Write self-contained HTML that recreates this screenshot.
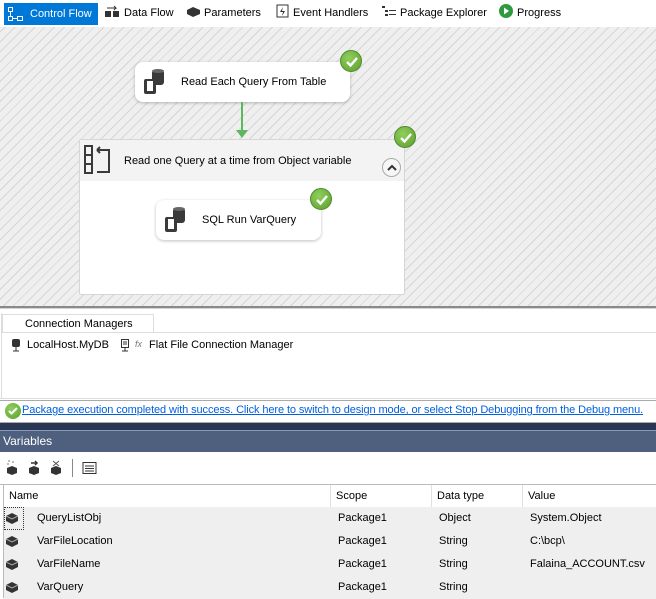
<!DOCTYPE html>
<html><head><meta charset="utf-8"><style>
*{margin:0;padding:0;box-sizing:border-box}
body{width:656px;height:598px;overflow:hidden;font-family:"Liberation Sans",sans-serif;font-size:11px;color:#000;background:#fff;position:relative}
.abs{position:absolute}
.tabs{top:0;left:0;width:656px;height:27px;background:#fff}
.tab{position:absolute;top:2px;height:22px;line-height:22px;white-space:nowrap}
.canvas{top:27px;left:0;width:656px;height:279px;background:#efefef repeating-linear-gradient(-45deg,#efefef 0 6px,#d6d6d6 6px 7px)}
.node{background:#fff;border-radius:8px;box-shadow:0 1px 3px rgba(0,0,0,.25)}
.chk{width:22px;height:22px;border-radius:50%;background:radial-gradient(circle at 40% 35%,#8fcf5c,#5c9e2e);border:1px solid #4f8a28}
.chk svg{position:absolute;left:4px;top:4px}
.row{position:absolute;left:0;width:656px;height:23px;background:#efefef;line-height:23px}
.row span{position:absolute}
</style></head><body>
<div class="abs tabs">
 <div class="tab" style="left:4px;width:94px;background:#0078d7;color:#fff;top:3px"><svg style="position:absolute;left:3px;top:3px" width="17" height="16"><g fill="none" stroke="#fff"><rect x="1.5" y="1.5" width="4" height="4"/><rect x="1.5" y="10.5" width="4" height="4"/><rect x="10.5" y="10.5" width="5" height="4"/><path d="M3.5 6v4M6 12.5h4"/></g></svg><span style="position:absolute;left:26px">Control Flow</span></div>
 <div class="tab" style="left:104px"><svg width="17" height="14" style="vertical-align:-2px"><rect x="1" y="7" width="6" height="6" fill="#333"/><rect x="9" y="7" width="6" height="6" fill="#333"/><path d="M3 4h9l-2-2M12 4l-2 2" stroke="#333" fill="none"/></svg> Data Flow</div>
 <div class="tab" style="left:186px"><svg width="15" height="14" style="vertical-align:-2px"><path d="M1 6l6-3 7 3v4l-7 3-6-3z" fill="#333"/></svg> Parameters</div>
 <div class="tab" style="left:276px"><svg width="14" height="14" style="vertical-align:-2px"><rect x="1" y="1" width="11" height="12" fill="none" stroke="#333"/><path d="M7 3l-3 5h3l-1 4 3-5H6z" fill="#333"/></svg> Event Handlers</div>
 <div class="tab" style="left:381px"><svg width="16" height="14" style="vertical-align:-2px"><g fill="#333"><rect x="1" y="2" width="3" height="2"/><rect x="4" y="6" width="3" height="2"/><rect x="4" y="10" width="3" height="2"/><rect x="8" y="6" width="7" height="1"/><rect x="8" y="10" width="7" height="1"/></g></svg> Package Explorer</div>
 <div class="tab" style="left:498px"><svg width="16" height="16" style="vertical-align:-3px"><circle cx="8" cy="8" r="7" fill="#2e9a3e"/><path d="M6 4.5v7l5-3.5z" fill="#fff"/></svg> Progress</div>
</div>
<div class="abs canvas"></div>
<div class="abs node" style="left:135px;top:62px;width:215px;height:40px"></div>
<svg class="abs" style="left:142px;top:67px" width="28" height="30"><g fill="#3a3a3a"><rect x="10" y="3" width="12" height="15" rx="3"/><rect x="2" y="12" width="12" height="15" rx="2"/></g><ellipse cx="16" cy="4" rx="6" ry="2" fill="#666"/><rect x="5" y="14" width="6" height="10" fill="#fff"/></svg>
<div class="abs" style="left:181px;top:76px">Read Each Query From Table</div>
<div class="abs chk" style="left:340px;top:50px"><svg width="14" height="14"><path d="M2 7l3.5 3.5L12 3" stroke="#fff" stroke-width="2.4" fill="none"/></svg></div>
<div class="abs" style="left:241px;top:102px;width:2px;height:30px;background:#5cb85c"></div>
<svg class="abs" style="left:236px;top:130px" width="12" height="9"><path d="M0 0h12L6 8z" fill="#5cb85c"/></svg>
<div class="abs" style="left:79px;top:139px;width:326px;height:156px;background:#fff;border:1px solid #d6d6d6;border-radius:2px"></div>
<div class="abs" style="left:80px;top:140px;width:324px;height:41px;background:#f3f3f3"></div>
<svg class="abs" style="left:84px;top:145px" width="28" height="30"><g fill="none" stroke="#3a3a3a" stroke-width="2"><rect x="1" y="1" width="7" height="27"/><path d="M1 10h7M1 19h7M13 5h12v22h-12M13 5l3-3M13 5l3 3"/></g></svg>
<div class="abs" style="left:124px;top:155px">Read one Query at a time from Object variable</div>
<div class="abs" style="left:382px;top:158px;width:19px;height:19px;border:1px solid #aaa;border-radius:50%;background:#f6f6f6"><svg style="position:absolute;left:4px;top:5px" width="10" height="7"><path d="M1 6l4-4 4 4" stroke="#333" stroke-width="2" fill="none"/></svg></div>
<div class="abs chk" style="left:394px;top:126px"><svg width="14" height="14"><path d="M2 7l3.5 3.5L12 3" stroke="#fff" stroke-width="2.4" fill="none"/></svg></div>
<div class="abs node" style="left:156px;top:200px;width:165px;height:40px"></div>
<svg class="abs" style="left:163px;top:205px" width="28" height="30"><g fill="#3a3a3a"><rect x="10" y="3" width="12" height="15" rx="3"/><rect x="2" y="12" width="12" height="15" rx="2"/></g><ellipse cx="16" cy="4" rx="6" ry="2" fill="#666"/><rect x="5" y="14" width="6" height="10" fill="#fff"/></svg>
<div class="abs" style="left:202px;top:214px">SQL Run VarQuery</div>
<div class="abs chk" style="left:310px;top:188px"><svg width="14" height="14"><path d="M2 7l3.5 3.5L12 3" stroke="#fff" stroke-width="2.4" fill="none"/></svg></div>
<div class="abs" style="left:0;top:306px;width:656px;height:3px;background:#8a8a8a;border-bottom:1px solid #d0d4dc"></div>
<div class="abs" style="left:2px;top:314px;width:152px;height:19px;border:1px solid #ddd;border-bottom:none;line-height:18px;padding-left:22px">Connection Managers</div>
<div class="abs" style="left:2px;top:332px;width:654px;height:1px;background:#ddd"></div>
<div class="abs" style="left:1px;top:313px;width:1px;height:86px;background:#ddd"></div>
<svg class="abs" style="left:11px;top:338px" width="10" height="14"><rect x="1" y="1" width="8" height="8" rx="2" fill="#333"/><path d="M5 9v4M2 13h6" stroke="#333"/></svg>
<div class="abs" style="left:27px;top:339px">LocalHost.MyDB</div>
<svg class="abs" style="left:120px;top:338px" width="10" height="14"><rect x="1.5" y="1.5" width="7" height="8" fill="#fff" stroke="#333"/><path d="M3 4h4M3 6h4M5 10v3M2 13h6" stroke="#333"/></svg>
<div class="abs" style="left:135px;top:339px;font-style:italic;font-size:9px;color:#777">fx</div>
<div class="abs" style="left:149px;top:339px">Flat File Connection Manager</div>
<div class="abs" style="left:0;top:398px;width:656px;height:1px;background:#ddd"></div>
<div class="abs" style="left:0;top:400px;width:656px;height:1px;background:#aaa"></div>
<div class="abs" style="left:5px;top:403px;width:16px;height:16px;border-radius:50%;background:radial-gradient(circle at 40% 35%,#8fcf5c,#5c9e2e)"><svg style="position:absolute;left:3px;top:3px" width="10" height="10"><path d="M1 5l2.5 2.5L9 2" stroke="#fff" stroke-width="2" fill="none"/></svg></div>
<div class="abs" style="left:22px;top:404px;color:#0060e0;text-decoration:underline;white-space:nowrap;letter-spacing:-0.1px">Package execution completed with success. Click here to switch to design mode, or select Stop Debugging from the Debug menu.</div>
<div class="abs" style="left:0;top:422px;width:656px;height:1px;background:#aaa"></div>
<div class="abs" style="left:0;top:423px;width:656px;height:7px;background:#293654"></div>
<div class="abs" style="left:0;top:430px;width:656px;height:1px;background:#8a9ab8"></div>
<div class="abs" style="left:0;top:431px;width:656px;height:21px;background:#4f607e;color:#fff;line-height:21px;padding-left:3px;font-size:12px">Variables</div>
<svg class="abs" style="left:5px;top:459px" width="95" height="18"><g fill="#333"><path d="M2 9l5-2 5 2v5l-5 2-5-2z"/><path d="M24 9l5-2 5 2v5l-5 2-5-2z"/><path d="M46 9l5-2 5 2v5l-5 2-5-2z"/></g><path d="M3 2h2M7 3h2M2 5h2" stroke="#777"/><path d="M26 4h6M30 2l2 2-2 2" stroke="#333" fill="none" stroke-width="1.5"/><path d="M48 2l6 5M54 2l-6 5" stroke="#555"/><rect x="67" y="0" width="1" height="18" fill="#888"/><rect x="78" y="3.5" width="13" height="11" fill="#fff" stroke="#333"/><path d="M80 7h9M80 9.5h9M80 12h9" stroke="#333"/></svg>
<div class="abs" style="left:0;top:484px;width:656px;height:1px;background:#bbb"></div>
<div class="abs" style="left:3px;top:485px;width:1px;height:113px;background:#bbb"></div>
<div class="abs" style="left:0;top:485px;width:656px;height:22px;line-height:22px">
 <span class="abs" style="left:9px">Name</span><span class="abs" style="left:336px">Scope</span><span class="abs" style="left:437px">Data type</span><span class="abs" style="left:528px">Value</span>
 <div class="abs" style="left:330px;top:0;width:1px;height:22px;background:#e0e0e0"></div>
 <div class="abs" style="left:431px;top:0;width:1px;height:22px;background:#e0e0e0"></div>
 <div class="abs" style="left:522px;top:0;width:1px;height:22px;background:#e0e0e0"></div>
</div>
<div class="row" style="top:507px;left:4px"><span style="left:0;top:0;width:20px;height:23px;border:1px dotted #333"></span><svg style="position:absolute;left:1px;top:5px" width="14" height="13"><path d="M1 4l6-3 6 3v5l-6 3-6-3z" fill="#333"/><path d="M1 4l6 3 6-3" stroke="#aaa" fill="none"/></svg><span style="left:33px">QueryListObj</span><span style="left:334px">Package1</span><span style="left:435px">Object</span><span style="left:526px">System.Object</span></div>
<div class="row" style="top:530px;left:4px"><svg style="position:absolute;left:1px;top:5px" width="14" height="13"><path d="M1 4l6-3 6 3v5l-6 3-6-3z" fill="#333"/><path d="M1 4l6 3 6-3" stroke="#aaa" fill="none"/></svg><span style="left:33px">VarFileLocation</span><span style="left:334px">Package1</span><span style="left:435px">String</span><span style="left:526px">C:\bcp\</span></div>
<div class="row" style="top:553px;left:4px"><svg style="position:absolute;left:1px;top:5px" width="14" height="13"><path d="M1 4l6-3 6 3v5l-6 3-6-3z" fill="#333"/><path d="M1 4l6 3 6-3" stroke="#aaa" fill="none"/></svg><span style="left:33px">VarFileName</span><span style="left:334px">Package1</span><span style="left:435px">String</span><span style="left:526px">Falaina_ACCOUNT.csv</span></div>
<div class="row" style="top:576px;left:4px"><svg style="position:absolute;left:1px;top:5px" width="14" height="13"><path d="M1 4l6-3 6 3v5l-6 3-6-3z" fill="#333"/><path d="M1 4l6 3 6-3" stroke="#aaa" fill="none"/></svg><span style="left:33px">VarQuery</span><span style="left:334px">Package1</span><span style="left:435px">String</span></div>
</body></html>
